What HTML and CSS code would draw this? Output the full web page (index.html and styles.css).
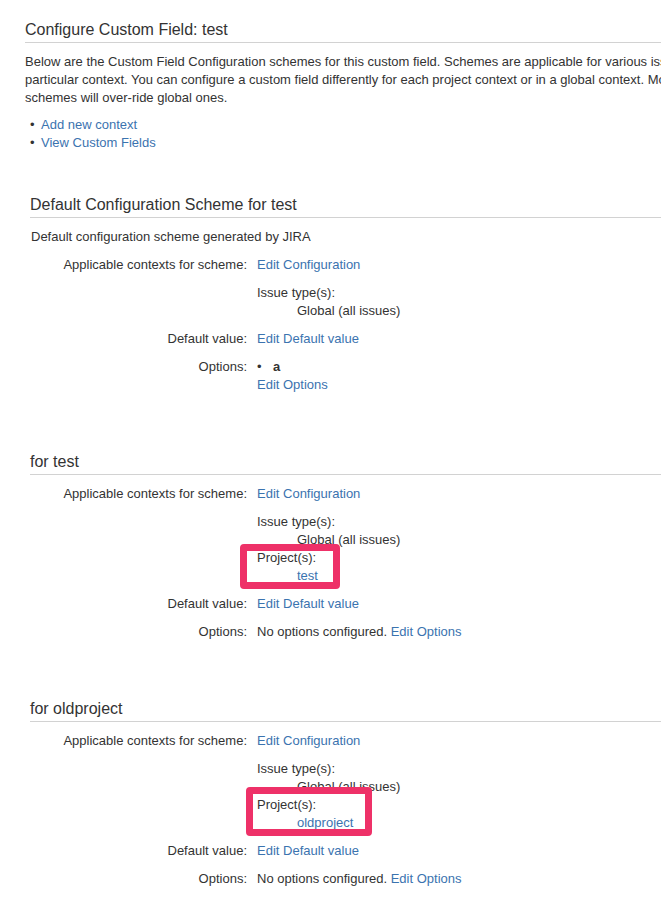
FILE: index.html
```html
<!DOCTYPE html>
<html lang="en">
<head>
<meta charset="utf-8">
<title>Configure Custom Field: test</title>
<link rel="stylesheet" href="styles.css">
</head>
<body>
<div class="page">
  <h1 class="page-title">Configure Custom Field: test</h1>
  <p class="intro">Below are the Custom Field Configuration schemes for this custom field. Schemes are applicable for various issue types in a particular context. You can configure a custom field differently for each project context or in a global context. More specific schemes will over-ride global ones.</p>
  <ul class="links">
    <li><a href="#">Add new context</a></li>
    <li><a href="#">View Custom Fields</a></li>
  </ul>

  <section class="scheme">
    <h2 class="scheme-title">Default Configuration Scheme for test</h2>
    <p class="scheme-desc">Default configuration scheme generated by JIRA</p>
    <div class="fields">
      <div class="label">Applicable contexts for scheme:</div>
      <div class="value"><a href="#">Edit Configuration</a></div>
      <div class="label"></div>
      <div class="value">
        <div>Issue type(s):</div>
        <div class="indent">Global (all issues)</div>
      </div>
      <div class="label">Default value:</div>
      <div class="value"><a href="#">Edit Default value</a></div>
      <div class="label">Options:</div>
      <div class="value">
        <div class="opt"><span class="dot">&bull;</span><b>a</b></div>
        <a href="#">Edit Options</a>
      </div>
    </div>
  </section>

  <section class="scheme">
    <h2 class="scheme-title">for test</h2>
    <div class="fields">
      <div class="label">Applicable contexts for scheme:</div>
      <div class="value"><a href="#">Edit Configuration</a></div>
      <div class="label"></div>
      <div class="value">
        <div>Issue type(s):</div>
        <div class="indent">Global (all issues)</div>
        <div class="projects">
          <div>Project(s):</div>
          <div class="indent"><a href="#">test</a></div>
          <span class="mark mark-a"></span>
        </div>
      </div>
      <div class="label">Default value:</div>
      <div class="value"><a href="#">Edit Default value</a></div>
      <div class="label">Options:</div>
      <div class="value">No options configured. <a href="#">Edit Options</a></div>
    </div>
  </section>

  <section class="scheme">
    <h2 class="scheme-title">for oldproject</h2>
    <div class="fields">
      <div class="label">Applicable contexts for scheme:</div>
      <div class="value"><a href="#">Edit Configuration</a></div>
      <div class="label"></div>
      <div class="value">
        <div>Issue type(s):</div>
        <div class="indent">Global (all issues)</div>
        <div class="projects">
          <div>Project(s):</div>
          <div class="indent"><a href="#">oldproject</a></div>
          <span class="mark mark-b"></span>
        </div>
      </div>
      <div class="label">Default value:</div>
      <div class="value"><a href="#">Edit Default value</a></div>
      <div class="label">Options:</div>
      <div class="value">No options configured. <a href="#">Edit Options</a></div>
    </div>
  </section>
</div>
</body>
</html>
```

FILE: styles.css
```css
html, body {
  margin: 0;
  padding: 0;
  background: #ffffff;
  overflow: hidden;
}

body {
  font-family: "Liberation Sans", Arial, Helvetica, sans-serif;
  font-size: 13px;
  line-height: 18px;
  color: #333333;
}

a {
  color: #3b73af;
  text-decoration: none;
}

.page {
  width: 725px;
  padding-left: 25px;
}

.page-title,
.scheme-title {
  margin: 0;
  font-size: 16px;
  line-height: 20px;
  font-weight: normal;
  color: #333333;
  padding-bottom: 2px;
  border-bottom: 1px solid #d2d2d2;
}

.page-title {
  margin-top: 20px;
}

.intro {
  margin: 10px 0 0;
}

.links {
  list-style: none;
  margin: 9px 0 0;
  padding: 0;
}

.links li::before {
  content: "\2022";
  display: inline-block;
  width: 16px;
  padding-left: 5px;
  box-sizing: border-box;
}

.scheme {
  margin-top: 43px;
  padding-left: 5px;
  padding-bottom: 15px;
}

.scheme-desc {
  margin: 10px 0 0 1px;
}

.fields {
  display: grid;
  grid-template-columns: 217px 1fr;
  column-gap: 10px;
  row-gap: 10px;
  margin-top: 10px;
}

.label {
  text-align: right;
}

.indent {
  padding-left: 40px;
}

.opt b {
  font-weight: bold;
}

.dot {
  display: inline-block;
  width: 16px;
}

.projects {
  position: relative;
}

.mark {
  position: absolute;
  box-sizing: border-box;
  border: 7px solid #ee3168;
  border-radius: 4px;
}

.mark-a {
  top: -5px;
  left: -17px;
  width: 100px;
  height: 45px;
}

.mark-b {
  top: -9px;
  left: -11px;
  width: 126px;
  height: 49px;
}
```
